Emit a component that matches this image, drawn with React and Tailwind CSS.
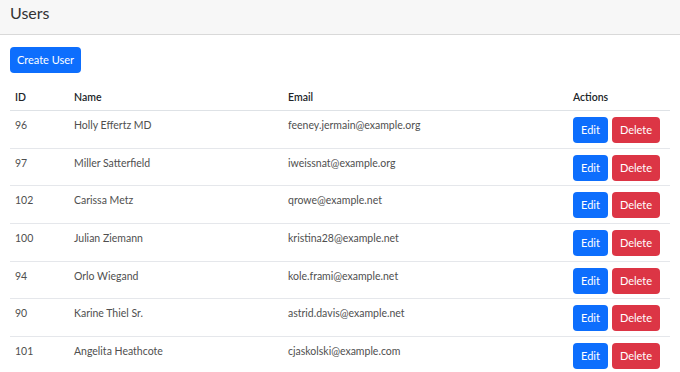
import React from "react";

const users = [
  { id: 96, name: "Holly Effertz MD", email: "feeney.jermain@example.org" },
  { id: 97, name: "Miller Satterfield", email: "iweissnat@example.org" },
  { id: 102, name: "Carissa Metz", email: "qrowe@example.net" },
  { id: 100, name: "Julian Ziemann", email: "kristina28@example.net" },
  { id: 94, name: "Orlo Wiegand", email: "kole.frami@example.net" },
  { id: 90, name: "Karine Thiel Sr.", email: "astrid.davis@example.net" },
  { id: 101, name: "Angelita Heathcote", email: "cjaskolski@example.com" }
];

const App = () => {
  return (
    <div className="w-[680px] h-[372px] overflow-hidden bg-white text-[#212529] font-['Lato',sans-serif]">
      {/* Card header */}
      <div className="h-[35px] bg-[#f7f7f7] border-b border-[#d9d9d9] px-[10px] pt-[2px]">
        <h1 className="text-[16px] leading-[22px] text-[#333]">Users</h1>
      </div>

      <div className="px-[10px] pt-[11px]">
        <button className="w-[71px] h-[26px] rounded-[4px] bg-[#0d6efd] text-white text-[11px] leading-[16px]">
          Create User
        </button>

        {/* Users table */}
        <table className="mt-[11px] w-[660px] table-fixed border-collapse text-[10.5px] leading-[16px]">
          <thead>
            <tr className="border-b border-[#dee2e6]">
              <th className="w-[59px] px-[5px] py-[5px] text-left font-semibold">ID</th>
              <th className="w-[214px] px-[5px] py-[5px] text-left font-semibold">Name</th>
              <th className="w-[285px] px-[5px] py-[5px] text-left font-semibold">Email</th>
              <th className="px-[5px] py-[5px] text-left font-semibold">Actions</th>
            </tr>
          </thead>
          <tbody>
            {users.map((u) => (
              <tr key={u.id} className="border-b border-[#e5e7eb] align-top text-[#4f4f4f]">
                <td className="px-[5px] pt-[6px] pb-[4.7px]">{u.id}</td>
                <td className="px-[5px] pt-[6px] pb-[4.7px]">{u.name}</td>
                <td className="px-[5px] pt-[6px] pb-[4.7px]">{u.email}</td>
                <td className="px-[5px] pt-[6px] pb-[4.7px]">
                  <div className="flex gap-[4px] text-[11px]">
                    <button className="w-[35px] h-[26px] rounded-[4px] bg-[#0d6efd] text-white">Edit</button>
                    <button className="w-[48px] h-[26px] rounded-[4px] bg-[#dc3545] text-white">Delete</button>
                  </div>
                </td>
              </tr>
            ))}
          </tbody>
        </table>
      </div>
    </div>
  );
};

export default App;
